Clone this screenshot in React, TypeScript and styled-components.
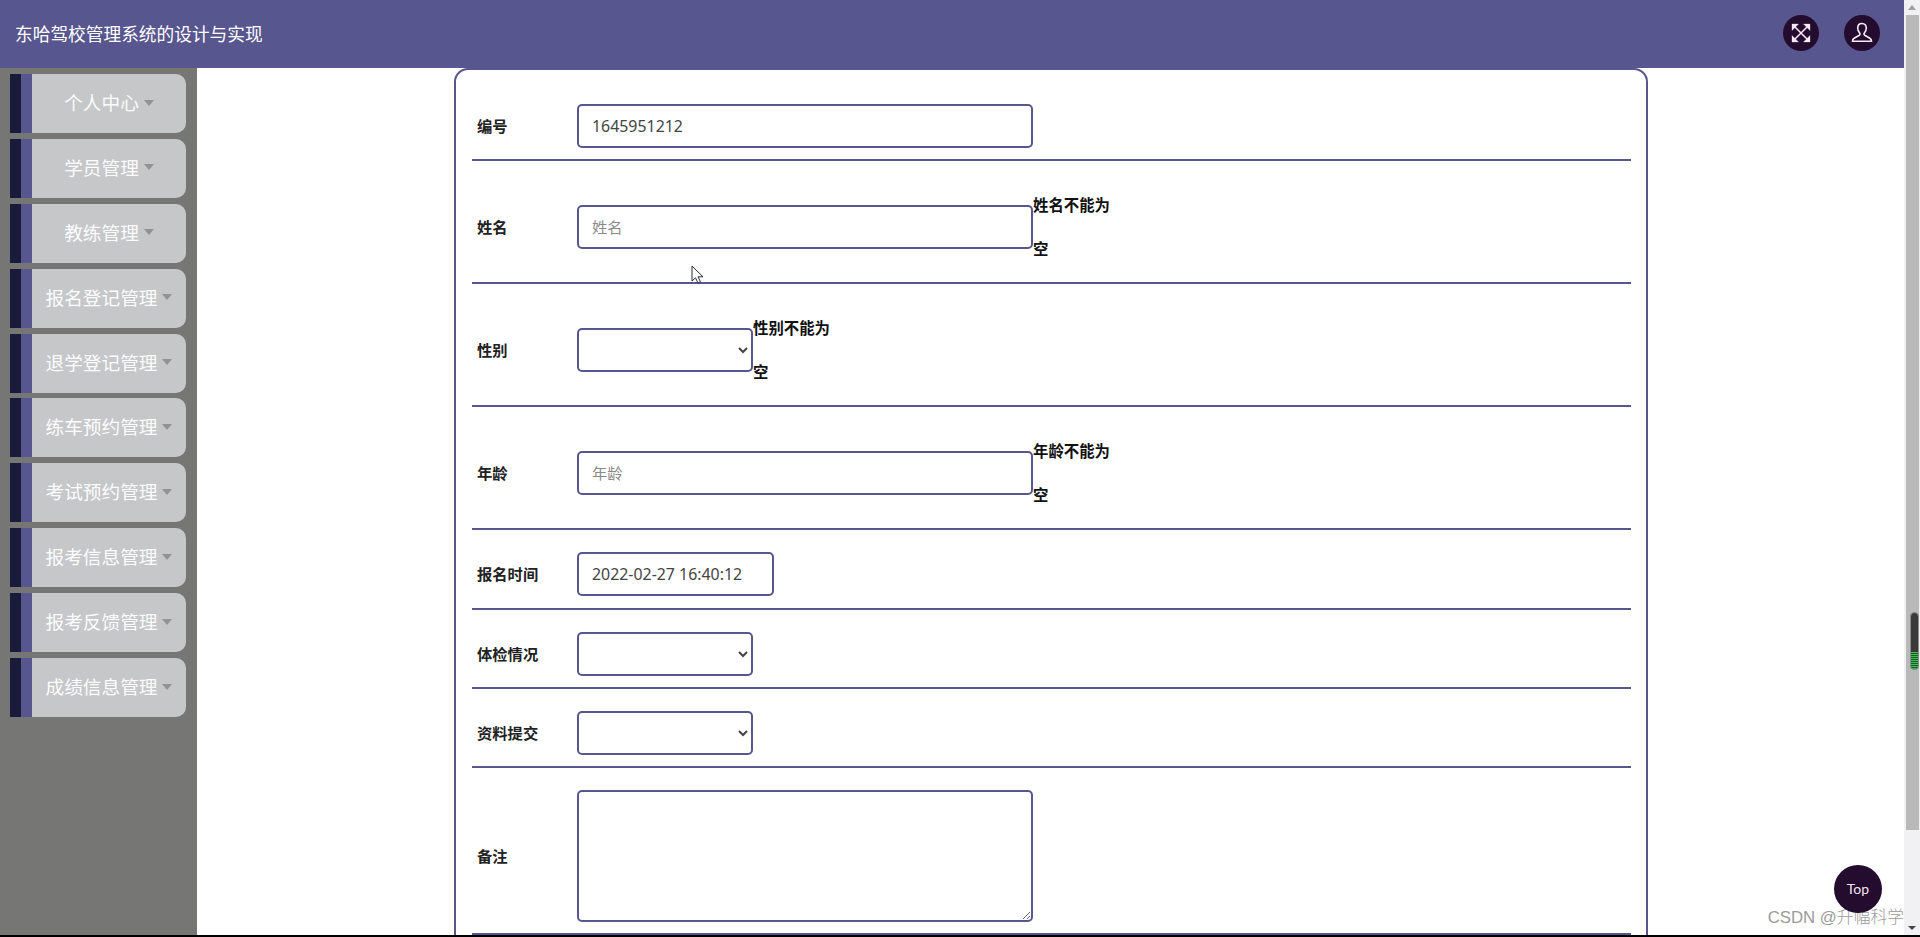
import React from 'react'
import styled, { createGlobalStyle } from 'styled-components'

const GlobalStyle = createGlobalStyle`
  html, body {
    margin: 0;
    padding: 0;
    height: 100%;
    overflow: hidden;
    background: #fff;
  }
  * {
    box-sizing: border-box;
  }
`

const cjk = `"Noto Sans", "Noto Sans CJK SC", sans-serif`
const purple = '#58568e'

const Page = styled.div`
  position: relative;
  width: 1920px;
  height: 937px;
  display: flex;
  flex-direction: column;
  overflow: hidden;
  font-family: ${cjk};
  border-bottom: 2px solid #000;
`
const Frame = styled.div`
  flex: 1;
  min-height: 0;
  display: flex;
`
const Main = styled.div`
  flex: 1;
  min-width: 0;
  display: flex;
  flex-direction: column;
`
const Header = styled.header`
  height: 68px;
  flex: none;
  display: flex;
  align-items: center;
  background: ${purple};
  padding: 0 24px 0 15px;
  position: relative;
  z-index: 2;
`
const Title = styled.div`
  flex: 1;
  color: #fff;
  font-size: 17.7px;
  font-weight: 400;
  padding-bottom: 3px;
`
const RoundButton = styled.div`
  width: 36px;
  height: 36px;
  border-radius: 50%;
  background: #230c2e;
  display: flex;
  align-items: center;
  justify-content: center;
  margin-left: 25px;
  margin-bottom: 2px;
`
const Body = styled.div`
  flex: 1;
  min-height: 0;
  display: flex;
`
const Sidebar = styled.nav`
  width: 197px;
  flex: none;
  background: #767675;
  padding: 6px 11px 0 10px;
  display: flex;
  flex-direction: column;
  gap: 5.9px;
`
const MenuItem = styled.div`
  height: 59px;
  flex: none;
  display: flex;
  align-items: center;
  justify-content: center;
  background: #c6c7c9;
  border-left: 11px solid #1a1a3a;
  border-radius: 0 10px 10px 0;
  box-shadow: inset 11px 0 0 ${purple};
  padding: 0 0 4px 11px;
  color: #fcfcfc;
  font-size: 18.67px;
  white-space: nowrap;
`
const Caret = styled.span`
  width: 0;
  height: 0;
  margin-left: 5px;
  margin-top: 2px;
  border-top: 6px solid #929294;
  border-left: 5.5px solid transparent;
  border-right: 5.5px solid transparent;
`
const Content = styled.main`
  flex: 1;
  min-width: 0;
  background: #fff;
  padding-left: 257px;
  overflow: hidden;
`
const Card = styled.div`
  width: 1194px;
  height: 900px;
  border: 2px solid ${purple};
  border-radius: 14px 14px 0 0;
  padding: 12px 14px 0 16px;
  background: #fff;
`
const Row = styled.div<{ $tight?: boolean }>`
  display: flex;
  align-items: center;
  margin-right: 1px;
  padding: 22px 0 ${(p) => (p.$tight ? '11px' : '11.5px')};
  border-bottom: 2px solid ${purple};
`
const Label = styled.label`
  width: 105px;
  flex: none;
  padding: 0 0 2px 5px;
  font-size: 15.3px;
  font-weight: 700;
  color: #222;
`
const fieldStyle = `
  height: 44px;
  border: 2px solid ${purple};
  border-radius: 5px;
  background: #fff;
  color: #444;
  font-family: ${cjk};
  font-size: 15.9px;
  outline: none;
  &::placeholder {
    color: #8a8a8a;
    font-size: 15.3px;
  }
`
const TextInput = styled.input<{ $width?: number }>`
  ${fieldStyle}
  width: ${(p) => p.$width ?? 456}px;
  padding: 0 13px;
`
const Select = styled.select`
  ${fieldStyle}
  width: 176px;
  padding: 0 7px 0 2px;
`
const TextArea = styled.textarea`
  ${fieldStyle}
  width: 456px;
  height: 132px;
  display: block;
`
const ErrorText = styled.div`
  width: 80px;
  padding-top: 1px;
  margin-bottom: -1px;
  font-size: 15.4px;
  font-weight: 700;
  line-height: 44px;
  color: #111;
`
const Scrollbar = styled.div`
  width: 16px;
  flex: none;
  background: #f1f0f3;
  display: flex;
  flex-direction: column;
  align-items: center;
`
const ArrowBox = styled.div`
  height: 15px;
  flex: none;
  display: flex;
  align-items: center;
  justify-content: center;
`
const ArrowUp = styled.span`
  border-bottom: 5px solid #a0a0a0;
  border-left: 4.5px solid transparent;
  border-right: 4.5px solid transparent;
`
const ArrowDown = styled.span`
  border-top: 4px solid #444;
  border-left: 4px solid transparent;
  border-right: 4px solid transparent;
`
const Thumb = styled.div`
  height: 815px;
  width: 13px;
  flex: none;
  margin-left: 1px;
  background: #b9b9b9;
`
const TrackRest = styled.div`
  flex: 1;
`
const Meter = styled.div`
  position: absolute;
  left: 1910px;
  top: 612px;
  width: 9px;
  height: 58px;
  border-radius: 5px;
  background: #393939;
  border: 1px solid #8c8c8c;
  overflow: hidden;
  &::after {
    content: '';
    position: absolute;
    left: 0;
    right: 0;
    bottom: 0;
    height: 17px;
    background: repeating-linear-gradient(#3fb950 0 1px, #1d5f2a 1px 2px);
  }
`
const TopButton = styled.div`
  position: absolute;
  left: 1834px;
  top: 865px;
  width: 48px;
  height: 48px;
  padding-bottom: 2px;
  border-radius: 50%;
  background: #230c2e;
  color: #f5e3f5;
  font-family: Lato, sans-serif;
  font-size: 14px;
  display: flex;
  align-items: center;
  justify-content: center;
`
const Watermark = styled.div`
  position: absolute;
  right: 16px;
  top: 906px;
  font-family: "Liberation Sans", "Noto Sans CJK SC", sans-serif;
  font-size: 16.8px;
  font-weight: 300;
  line-height: 24px;
  color: #9b9b9b;
  white-space: nowrap;
`
const Cursor = styled.svg`
  position: absolute;
  left: 691px;
  top: 265px;
`

const menus = [
  '个人中心',
  '学员管理',
  '教练管理',
  '报名登记管理',
  '退学登记管理',
  '练车预约管理',
  '考试预约管理',
  '报考信息管理',
  '报考反馈管理',
  '成绩信息管理',
]

const ExpandIcon = () => (
  <svg width="24" height="24" viewBox="0 0 24 24" fill="#f7e8f7" stroke="#f7e8f7">
    <path d="M6 6L18 18M18 6L6 18" strokeWidth="1.5" fill="none" />
    <path d="M3 3h6.500L3 9.500zM21 3v6.500L14.500 3zM3 21v-6.500L9.500 21zM21 21h-6.500L21 14.500z" strokeWidth="0.3" />
  </svg>
)

const UserIcon = () => (
  <svg width="24" height="24" viewBox="0 0 24 24" fill="none" stroke="#f7e8f7" strokeWidth="1.6">
    <path d="M12 2.500c-2.800 0-4.300 2-4.300 4.600 0 2.100.9 3.900 2 5 .5.600.4 1.700-.4 2.200l-5.200 3c-1.100.6-1.600 1.500-1.600 3h19c0-1.500-.5-2.400-1.600-3l-5.200-3c-.8-.5-.9-1.600-.4-2.200 1.100-1.100 2-2.900 2-5 0-2.600-1.500-4.600-4.300-4.600z" />
  </svg>
)

const App = () => {
  return (
    <Page>
      <GlobalStyle />
      <Frame>
        <Main>
          <Header>
            <Title>东哈驾校管理系统的设计与实现</Title>
            <RoundButton>
              <ExpandIcon />
            </RoundButton>
            <RoundButton>
              <UserIcon />
            </RoundButton>
          </Header>
          <Body>
            <Sidebar>
              {menus.map((m) => (
                <MenuItem key={m}>
                  {m}
                  <Caret />
                </MenuItem>
              ))}
            </Sidebar>
            <Content>
              <Card>
                <Row $tight>
                  <Label>编号</Label>
                  <TextInput defaultValue="1645951212" />
                </Row>
                <Row $tight>
                  <Label>姓名</Label>
                  <TextInput placeholder="姓名" />
                  <ErrorText>姓名不能为空</ErrorText>
                </Row>
                <Row $tight>
                  <Label>性别</Label>
                  <Select />
                  <ErrorText>性别不能为空</ErrorText>
                </Row>
                <Row $tight>
                  <Label>年龄</Label>
                  <TextInput placeholder="年龄" />
                  <ErrorText>年龄不能为空</ErrorText>
                </Row>
                <Row>
                  <Label>报名时间</Label>
                  <TextInput $width={197} defaultValue="2022-02-27 16:40:12" />
                </Row>
                <Row>
                  <Label>体检情况</Label>
                  <Select />
                </Row>
                <Row $tight>
                  <Label>资料提交</Label>
                  <Select />
                </Row>
                <Row $tight>
                  <Label>备注</Label>
                  <TextArea />
                </Row>
              </Card>
            </Content>
          </Body>
        </Main>
        <Scrollbar>
          <ArrowBox>
            <ArrowUp />
          </ArrowBox>
          <Thumb />
          <TrackRest />
          <ArrowBox>
            <ArrowDown />
          </ArrowBox>
        </Scrollbar>
      </Frame>
      <Meter />
      <Watermark>CSDN @升幅科学</Watermark>
      <TopButton>Top</TopButton>
      <Cursor width="14" height="20" viewBox="0 0 14 20">
        <path d="M1 1v15l3.500-3.200 2.500 5.200 2.500-1.200-2.500-5h5z" fill="#fff" stroke="#2a2a3a" strokeWidth="1" />
      </Cursor>
    </Page>
  )
}

export default App
